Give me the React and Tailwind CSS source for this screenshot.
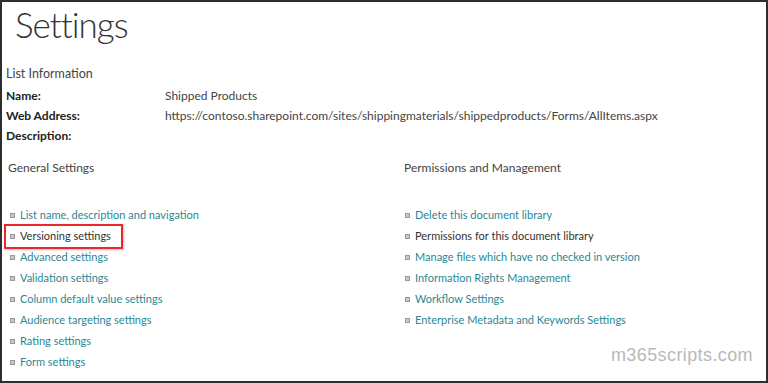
const general = [
  "List name, description and navigation",
  "Versioning settings",
  "Advanced settings",
  "Validation settings",
  "Column default value settings",
  "Audience targeting settings",
  "Rating settings",
  "Form settings",
];

const permissions = [
  "Delete this document library",
  "Permissions for this document library",
  "Manage files which have no checked in version",
  "Information Rights Management",
  "Workflow Settings",
  "Enterprise Metadata and Keywords Settings",
];

function Bullet() {
  return <span className="inline-block h-[5px] w-[5px] shrink-0 border border-[#9a9a9a] bg-[#c8c8c8]" />;
}

function LinkRow({ label, dark, boxed }) {
  return (
    <li className="relative flex h-[21px] items-center gap-[5px]">
      <Bullet />
      <a href="#" className={dark ? "text-[#333]" : "text-[#2b8894]"}>
        {label}
      </a>
      {boxed && (
        <span className="pointer-events-none absolute -left-[6px] top-[-2px] h-[25px] w-[119px] border-2 border-[#e8282b] shadow-[1px_1px_2px_rgba(0,0,0,0.25)]" />
      )}
    </li>
  );
}

export default function App() {
  return (
    <div className="h-[383px] w-[768px] overflow-hidden border-2 border-[#2e2e2e] bg-white font-['Lato','Liberation_Sans',sans-serif] text-[12px] text-[#444]">
      {/* Title */}
      <h1 className="pl-[13px] pt-[0px] text-[35px] font-light leading-[44px] tracking-[-1px] text-[#333]">
        Settings
      </h1>

      {/* List info */}
      <div className="mt-[18px] pl-[4px]">
        <div className="h-[20px] text-[12.5px] leading-[20px]">List Information</div>
        <div className="mt-[2px] grid grid-cols-[159px_1fr] leading-[20px]">
          <span className="font-bold text-[#222]">Name:</span>
          <span>Shipped Products</span>
          <span className="font-bold text-[#222]">Web Address:</span>
          <span>https://contoso.sharepoint.com/sites/shippingmaterials/shippedproducts/Forms/AllItems.aspx</span>
          <span className="font-bold text-[#222]">Description:</span>
          <span />
        </div>
      </div>

      {/* Settings columns */}
      <div className="mt-[12px] grid grid-cols-[396px_1fr] pl-[6px]">
        <div>
          <h2 className="h-[20px] leading-[20px]">General Settings</h2>
          <ul className="mt-[27px] pl-[2px] text-[11px]">
            {general.map((g, i) => (
              <LinkRow key={g} label={g} dark={i === 1} boxed={i === 1} />
            ))}
          </ul>
        </div>
        <div>
          <h2 className="h-[20px] leading-[20px]">Permissions and Management</h2>
          <ul className="mt-[27px] pl-[1px] text-[11px]">
            {permissions.map((p, i) => (
              <LinkRow key={p} label={p} dark={i === 1} />
            ))}
          </ul>
          <div className="mt-[14px] pr-[13px] text-right font-['Liberation_Sans',sans-serif] text-[18px] leading-[20px] tracking-[0.4px] text-[#b8b8b8]">
            m365scripts.com
          </div>
        </div>
      </div>
    </div>
  );
}
